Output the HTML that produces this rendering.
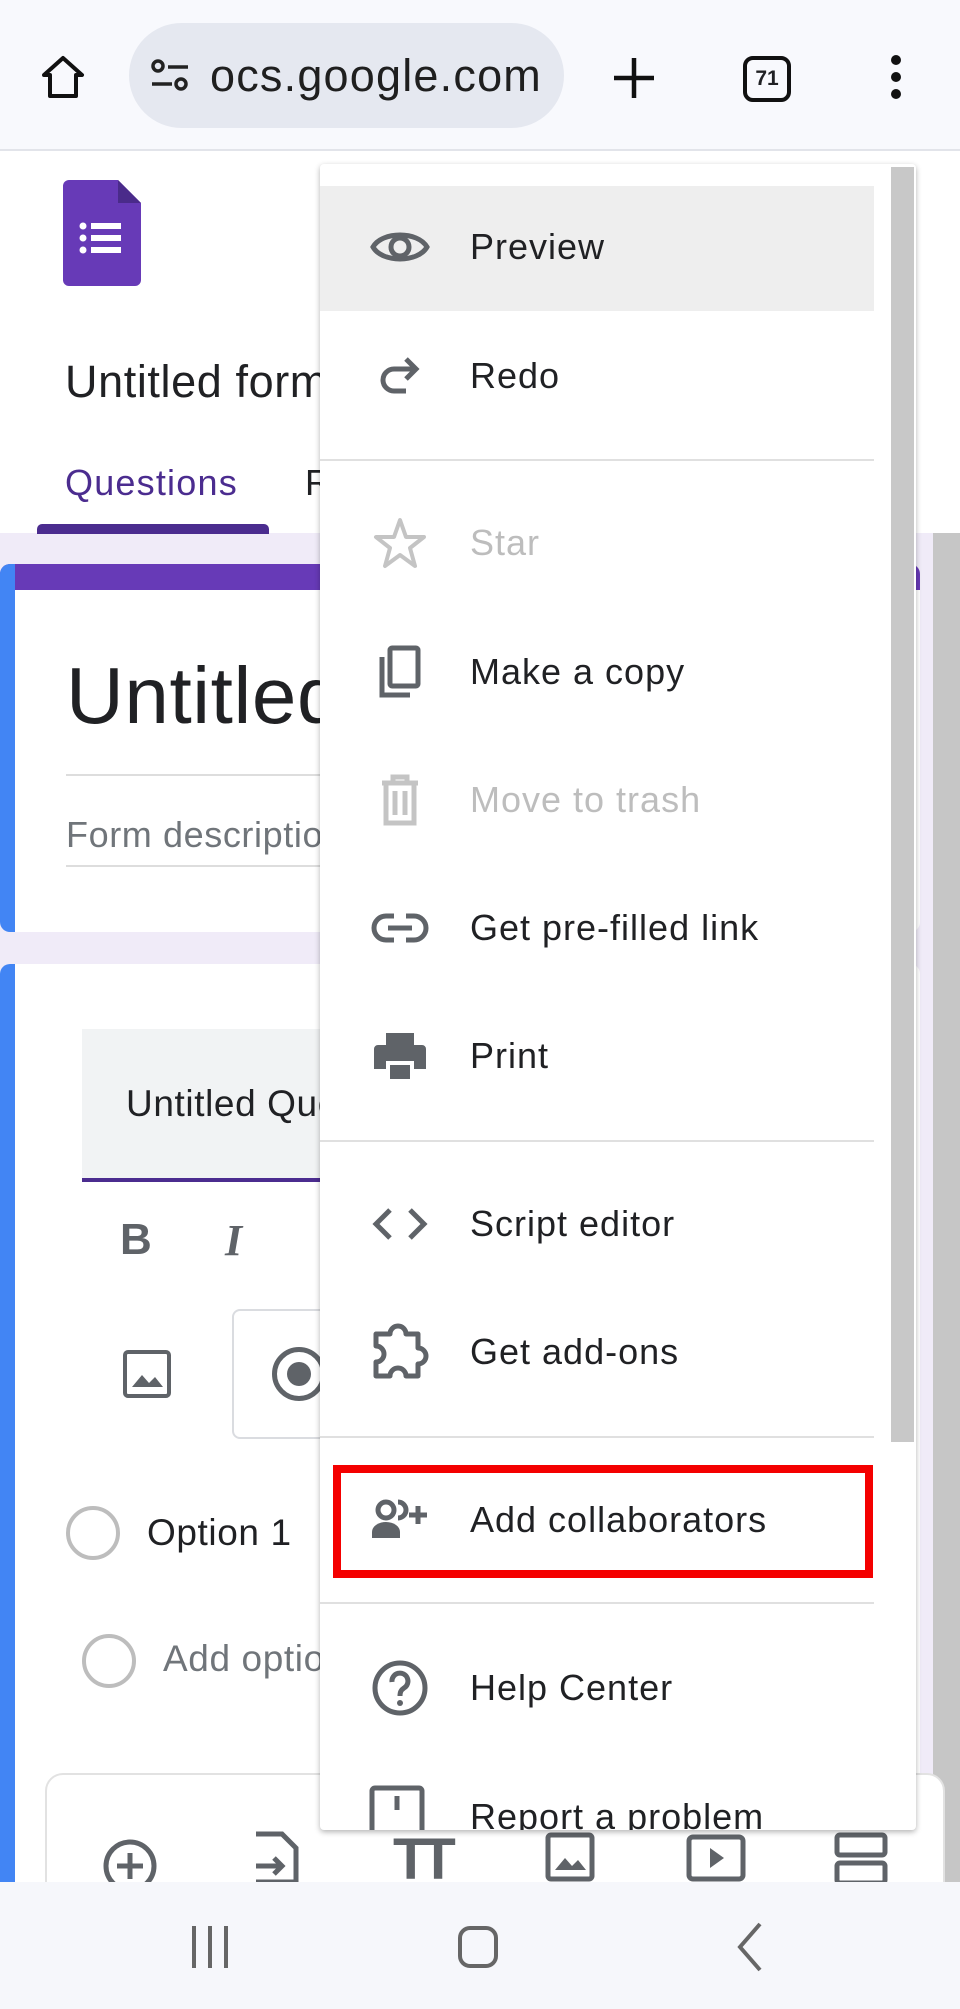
<!DOCTYPE html>
<html><head><meta charset="utf-8"><style>
*{margin:0;padding:0;box-sizing:border-box}
body{width:960px;height:2009px;position:relative;overflow:hidden;background:#f0ebf8;font-family:"Liberation Sans",Roboto,sans-serif;color:#202124;letter-spacing:0.6px}
.a{position:absolute}
.mi{position:absolute;left:320px;width:554px;height:100px;}
.mi .t{position:absolute;left:150px;top:50%;transform:translateY(-50%);font-size:36px;letter-spacing:1px;color:#202124;white-space:nowrap}
.mi svg{position:absolute;left:50px;top:50%;transform:translateY(-50%)}
.dis .t{color:#bdbdbd}
.div{position:absolute;left:320px;width:554px;height:2px;background:#e0e0e0}
</style></head><body>
<div class="a" style="left:0;top:0;width:960px;height:533px;background:#fff"></div>
<div class="a" style="left:0;top:0;width:960px;height:151px;background:#f8f9fd;border-bottom:2px solid #e2e4ea"></div>
<svg class="a" style="left:38px;top:52px" width="50" height="50" viewBox="0 0 50 50"><path d="M25 6 L44 23 H38 V44 H12 V23 H6 Z" fill="none" stroke="#111" stroke-width="4" stroke-linejoin="round"/></svg>
<div class="a" style="left:129px;top:23px;width:435px;height:105px;border-radius:53px;background:#e5e8f0"></div>
<svg class="a" style="left:150px;top:58px" width="42" height="36" viewBox="0 0 42 36"><circle cx="8" cy="8" r="5" fill="none" stroke="#222" stroke-width="3.5"/><line x1="18" y1="9" x2="38" y2="9" stroke="#222" stroke-width="3.5"/><line x1="2" y1="26" x2="22" y2="26" stroke="#222" stroke-width="3.5"/><circle cx="31" cy="26" r="5" fill="none" stroke="#222" stroke-width="3.5"/></svg>
<div class="a" style="left:210px;top:50px;font-size:45px;letter-spacing:1.2px;color:#1f1f1f">ocs.google.com</div>
<svg class="a" style="left:612px;top:56px" width="44" height="44"><path d="M22 2V42M2 22H42" stroke="#111" stroke-width="4.5"/></svg>
<div class="a" style="left:743px;top:56px;width:48px;height:46px;border:4.5px solid #111;border-radius:10px;font-size:21px;text-align:center;line-height:37px;font-weight:bold;letter-spacing:0">71</div>
<div class="a" style="left:891px;top:55px;width:10px;height:10px;border-radius:5px;background:#111"></div>
<div class="a" style="left:891px;top:72px;width:10px;height:10px;border-radius:5px;background:#111"></div>
<div class="a" style="left:891px;top:89px;width:10px;height:10px;border-radius:5px;background:#111"></div>
<svg class="a" style="left:63px;top:180px" width="78" height="106" viewBox="0 0 78 106"><path d="M6 0H55L78 23V100a6 6 0 0 1-6 6H6a6 6 0 0 1-6-6V6a6 6 0 0 1 6-6Z" fill="#673ab7"/><path d="M55 0V23H78Z" fill="#4a2b8a"/><g fill="#fff"><circle cx="20" cy="46" r="3.5"/><circle cx="20" cy="58" r="3.5"/><circle cx="20" cy="70" r="3.5"/><rect x="28" y="43" width="30" height="6"/><rect x="28" y="55" width="30" height="6"/><rect x="28" y="67" width="30" height="6"/></g></svg>
<div class="a" style="left:65px;top:356px;font-size:45px">Untitled form</div>
<div class="a" style="left:65px;top:462px;font-size:36px;letter-spacing:1.2px;color:#4b2c8f">Questions</div>
<div class="a" style="left:305px;top:462px;font-size:36px">R</div>
<div class="a" style="left:37px;top:524px;width:232px;height:10px;background:#4b2c8f;border-radius:5px 5px 0 0"></div>
<div class="a" style="left:933px;top:533px;width:27px;height:1350px;background:#c6c6c6"></div>
<div class="a" style="left:0;top:564px;width:920px;height:368px;background:#fff;border-radius:10px;overflow:hidden"><div style="height:26px;background:#673ab7"></div><div class="a" style="left:0;top:0;width:15px;height:368px;background:#4285f4"></div></div>
<div class="a" style="left:66px;top:650px;font-size:80px;color:#202124">Untitled form</div>
<div class="a" style="left:66px;top:774px;width:850px;height:2px;background:#ddd"></div>
<div class="a" style="left:66px;top:814px;font-size:36px;color:#70757a">Form description</div>
<div class="a" style="left:66px;top:865px;width:850px;height:2px;background:#ddd"></div>
<div class="a" style="left:0;top:964px;width:920px;height:940px;background:#fff;border-radius:10px;overflow:hidden"><div class="a" style="left:0;top:0;width:15px;height:940px;background:#4285f4"></div></div>
<div class="a" style="left:82px;top:1029px;width:500px;height:153px;background:#f1f3f4;border-bottom:4px solid #4b2c8f"></div>
<div class="a" style="left:126px;top:1083px;font-size:37px">Untitled Question</div>
<div class="a" style="left:120px;top:1215px;font-size:44px;font-weight:bold;color:#5f6368">B</div>
<div class="a" style="left:225px;top:1215px;font-size:44px;font-weight:bold;font-style:italic;color:#5f6368;font-family:'Liberation Serif',serif">I</div>
<svg class="a" style="left:122px;top:1349px" width="50" height="50" viewBox="0 0 50 50"><rect x="3" y="3" width="44" height="44" rx="3" fill="none" stroke="#5f6368" stroke-width="4"/><path d="M10 38L20 26 27 34 33 28 41 38Z" fill="#5f6368"/></svg>
<div class="a" style="left:232px;top:1309px;width:200px;height:130px;border:2px solid #dadce0;border-radius:8px"></div>
<div class="a" style="left:272px;top:1347px;width:54px;height:54px;border:5px solid #5f6368;border-radius:50%"><div style="margin:10px;width:24px;height:24px;border-radius:50%;background:#5f6368"></div></div>
<div class="a" style="left:66px;top:1506px;width:54px;height:54px;border:4px solid #bdbdbd;border-radius:50%"></div>
<div class="a" style="left:147px;top:1512px;font-size:37px">Option 1</div>
<div class="a" style="left:82px;top:1634px;width:54px;height:54px;border:4px solid #bdbdbd;border-radius:50%"></div>
<div class="a" style="left:163px;top:1638px;font-size:37px;color:#70757a">Add option</div>
<div class="a" style="left:45px;top:1773px;width:900px;height:130px;background:#fff;border:2px solid #e2e2e2;border-radius:18px"></div>
<svg class="a" style="left:100px;top:1836px" width="60" height="60"><circle cx="30" cy="30" r="24" fill="none" stroke="#5f6368" stroke-width="5"/><path d="M30 17V43M17 30H43" stroke="#5f6368" stroke-width="5"/></svg>
<svg class="a" style="left:252px;top:1830px" width="50" height="56"><path d="M4 4H30L44 18V52H4" fill="none" stroke="#5f6368" stroke-width="5"/><path d="M4 36H30M22 28L30 36 22 44" fill="none" stroke="#5f6368" stroke-width="5"/></svg>
<div class="a" style="left:393px;top:1826px;font-size:58px;font-weight:bold;color:#5f6368;letter-spacing:-8px">TT</div>
<svg class="a" style="left:545px;top:1832px" width="50" height="50"><rect x="3" y="3" width="44" height="44" rx="3" fill="none" stroke="#5f6368" stroke-width="5"/><path d="M10 38L20 26 27 34 33 28 41 38Z" fill="#5f6368"/></svg>
<svg class="a" style="left:686px;top:1834px" width="60" height="50"><rect x="3" y="3" width="54" height="42" rx="4" fill="none" stroke="#5f6368" stroke-width="5"/><path d="M24 14L38 24 24 34Z" fill="#5f6368"/></svg>
<svg class="a" style="left:834px;top:1832px" width="54" height="54"><rect x="3" y="3" width="48" height="20" rx="3" fill="none" stroke="#5f6368" stroke-width="5"/><rect x="3" y="31" width="48" height="20" rx="3" fill="none" stroke="#5f6368" stroke-width="5"/></svg>
<div class="a" style="left:0;top:1882px;width:960px;height:127px;background:#f6f7fb"></div>
<svg class="a" style="left:188px;top:1922px" width="44" height="50"><path d="M6 4V46M22 4V46M38 4V46" stroke="#666" stroke-width="4"/></svg>
<div class="a" style="left:458px;top:1926px;width:40px;height:42px;border:4px solid #666;border-radius:12px"></div>
<svg class="a" style="left:732px;top:1920px" width="36" height="54"><path d="M28 4L8 27 28 50" fill="none" stroke="#666" stroke-width="4"/></svg>
<div class="a" style="left:320px;top:164px;width:596px;height:1666px;background:#fff;border-radius:4px;box-shadow:0 2px 6px rgba(0,0,0,.3);overflow:hidden">
<div class="a" style="left:571px;top:3px;width:23px;height:1275px;background:#c8c8c8"></div>
</div>
<div class="a" style="left:320px;top:186px;width:554px;height:125px;background:#eeeeee"></div>
<div class="mi" style="top:197px"><svg width="60" height="44" viewBox="0 0 60 44"><path d="M3 22C12 6 48 6 57 22 48 38 12 38 3 22Z" fill="none" stroke="#5f6368" stroke-width="5"/><circle cx="30" cy="22" r="9" fill="none" stroke="#5f6368" stroke-width="5"/></svg><div class="t">Preview</div></div>
<div class="mi" style="top:326px"><svg width="60" height="50" viewBox="0 0 60 50" ><path d="M44 18H24a11 11 0 0 0 0 22H36" fill="none" stroke="#5f6368" stroke-width="5"/><path d="M36 8L46 18 36 28" fill="none" stroke="#5f6368" stroke-width="5"/></svg><div class="t">Redo</div></div>
<div class="div" style="top:459px"></div>
<div class="mi dis" style="top:493px"><svg width="60" height="54" viewBox="0 0 60 54"><path d="M30 4L36 21H54L40 32 45 50 30 39 15 50 20 32 6 21H24Z" fill="none" stroke="#c4c4c4" stroke-width="4" stroke-linejoin="round"/></svg><div class="t">Star</div></div>
<div class="mi" style="top:622px"><svg width="60" height="54" viewBox="0 0 60 54"><path d="M12 12V50H40" fill="none" stroke="#5f6368" stroke-width="5"/><rect x="20" y="3" width="28" height="38" rx="2" fill="none" stroke="#5f6368" stroke-width="5"/></svg><div class="t">Make a copy</div></div>
<div class="mi dis" style="top:750px"><svg width="60" height="54" viewBox="0 0 60 54"><path d="M12 10H48M23 10V4H37V10M16 10V50H44V10M25 18V42M35 18V42" fill="none" stroke="#c4c4c4" stroke-width="5"/></svg><div class="t">Move to trash</div></div>
<div class="mi" style="top:878px"><svg width="60" height="40" viewBox="0 0 60 40"><path d="M24 8H16a12 12 0 0 0 0 24H24M36 8H44a12 12 0 0 1 0 24H36M18 20H42" fill="none" stroke="#5f6368" stroke-width="5"/></svg><div class="t">Get pre-filled link</div></div>
<div class="mi" style="top:1006px"><svg width="60" height="54" viewBox="0 0 60 54"><rect x="16" y="4" width="28" height="12" fill="#5f6368"/><path d="M8 16H52a4 4 0 0 1 4 4V40H44V32H16V40H4V20a4 4 0 0 1 4-4Z" fill="#5f6368"/><rect x="20" y="36" width="20" height="14" fill="#5f6368"/></svg><div class="t">Print</div></div>
<div class="div" style="top:1140px"></div>
<div class="mi" style="top:1174px"><svg width="60" height="40" viewBox="0 0 60 40"><path d="M20 6L6 20 20 34M40 6L54 20 40 34" fill="none" stroke="#5f6368" stroke-width="5"/></svg><div class="t">Script editor</div></div>
<div class="mi" style="top:1302px"><svg width="60" height="60" viewBox="0 0 60 60"><path d="M6 12H20a8 8 0 0 1 16 0H48V26a8 8 0 0 1 0 16V54H36a8 8 0 0 0-16 0H6V40a8 8 0 0 0 0-16Z" fill="none" stroke="#5f6368" stroke-width="5" stroke-linejoin="round"/></svg><div class="t">Get add-ons</div></div>
<div class="div" style="top:1436px"></div>
<div class="a" style="left:333px;top:1465px;width:540px;height:113px;border:8px solid #f40000"></div>
<div class="mi" style="top:1470px"><svg width="60" height="44" viewBox="0 0 60 44"><circle cx="16" cy="12" r="8" fill="none" stroke="#5f6368" stroke-width="5"/><path d="M2 40V34a14 10 0 0 1 28 0V40Z" fill="#5f6368"/><path d="M28 4a8 8 0 0 1 0 16" fill="none" stroke="#5f6368" stroke-width="5"/><path d="M48 8V26M39 17H57" stroke="#5f6368" stroke-width="5"/></svg><div class="t">Add collaborators</div></div>
<div class="div" style="top:1602px"></div>
<div class="mi" style="top:1638px"><svg width="60" height="60" viewBox="0 0 60 60"><circle cx="30" cy="30" r="25" fill="none" stroke="#5f6368" stroke-width="5"/><path d="M22 24a8 8 0 1 1 12 6c-3 2-4 4-4 8" fill="none" stroke="#5f6368" stroke-width="5"/><circle cx="30" cy="45" r="3" fill="#5f6368"/></svg><div class="t">Help Center</div></div>
<div class="a" style="left:320px;top:1780px;width:554px;height:50px;overflow:hidden"><svg class="a" style="left:48px;top:4px" width="60" height="60"><rect x="4" y="4" width="50" height="50" rx="3" fill="none" stroke="#5f6368" stroke-width="5"/><path d="M29 12V26" stroke="#5f6368" stroke-width="5"/></svg><div class="a" style="left:150px;top:16px;font-size:36px;letter-spacing:1px">Report a problem</div></div>
</body></html>
